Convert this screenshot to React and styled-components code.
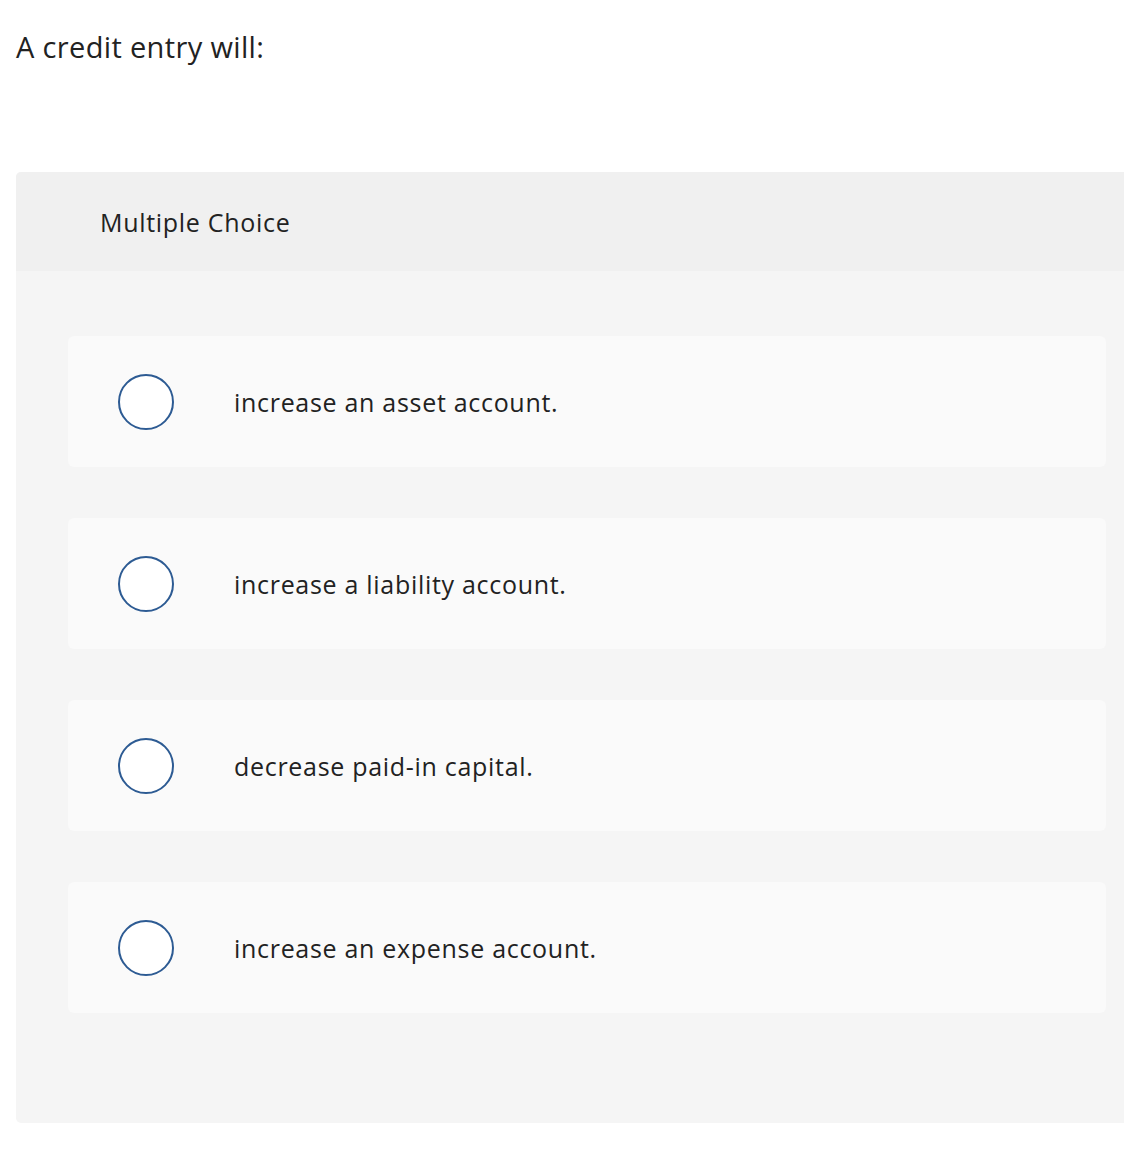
import React from "react";
import styled, { createGlobalStyle } from "styled-components";

const GlobalStyle = createGlobalStyle`
  html, body {
    margin: 0;
    padding: 0;
    background: #ffffff;
    overflow-x: hidden;
  }
  body {
    font-family: "Open Sans", "Liberation Sans", sans-serif;
    color: #1f1f1f;
  }
`;

const Page = styled.div`
  width: 1124px;
  padding-top: 28px;
`;

const Question = styled.div`
  font-size: 29px;
  line-height: 38px;
  letter-spacing: 0.35px;
  padding-left: 16px;
  color: #222222;
`;

const Panel = styled.div`
  margin-top: 106px;
  margin-left: 16px;
  background: #f5f5f5;
  border-radius: 5px 0 0 5px;
  overflow: hidden;
  padding-bottom: 110px;
`;

const PanelHeader = styled.div`
  height: 99px;
  background: #f0f0f0;
  display: flex;
  align-items: center;
  padding-left: 84px;
  font-size: 25px;
  letter-spacing: 0.7px;
  color: #222222;
`;

const Options = styled.div`
  display: flex;
  flex-direction: column;
  gap: 51px;
  padding: 65px 18px 0 52px;
`;

const Option = styled.label`
  display: flex;
  align-items: center;
  height: 131px;
  background: #fafafa;
  border-radius: 6px;
  padding-left: 50px;
  cursor: pointer;
`;

const Radio = styled.span`
  width: 52px;
  height: 52px;
  border: 2px solid #2d5b93;
  border-radius: 50%;
  background: #ffffff;
  flex-shrink: 0;
`;

const OptionText = styled.span`
  margin-left: 60px;
  font-size: 25px;
  letter-spacing: 0.7px;
  color: #222222;
`;

const choices = [
  "increase an asset account.",
  "increase a liability account.",
  "decrease paid-in capital.",
  "increase an expense account.",
];

const App = () => {
  return (
    <Page>
      <GlobalStyle />
      <Question>A credit entry will:</Question>
      <Panel>
        <PanelHeader>Multiple Choice</PanelHeader>
        <Options>
          {choices.map((c) => (
            <Option key={c}>
              <Radio />
              <OptionText>{c}</OptionText>
            </Option>
          ))}
        </Options>
      </Panel>
    </Page>
  );
};

export default App;
